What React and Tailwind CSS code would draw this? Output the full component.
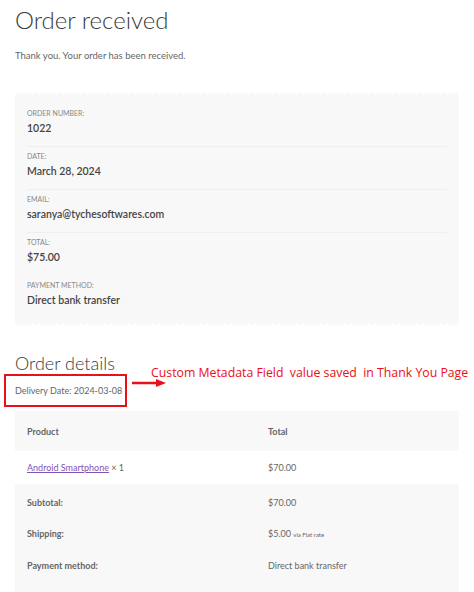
import React from 'react';

function Zigzag({ flip }) {
    return (
        <svg className="block w-full h-[3px]" preserveAspectRatio="none" viewBox="0 0 444 3">
            <defs>
                <pattern id={flip ? 'zzb' : 'zzt'} width="6" height="3" patternUnits="userSpaceOnUse">
                    {flip ? <polygon points="0,0 6,0 3,3" fill="#f8f8f8" /> : <polygon points="0,3 3,0 6,3" fill="#f8f8f8" />}
                </pattern>
            </defs>
            <rect width="444" height="3" fill={`url(#${flip ? 'zzb' : 'zzt'})`} />
        </svg>
    );
}

const overview = [
    { label: 'Order number:', value: '1022' },
    { label: 'Date:', value: 'March 28, 2024' },
    { label: 'Email:', value: 'saranya@tychesoftwares.com' },
    { label: 'Total:', value: '$75.00' },
    { label: 'Payment method:', value: 'Direct bank transfer' },
];

export default function App() {
    return (
        <div className="w-[474px] h-[592px] overflow-hidden bg-white text-[#333] relative" style={{ fontFamily: 'Lato, "Noto Sans", sans-serif' }}>
            <div className="pl-[15px] pr-[15px]">
                <h1 className="text-[24px] font-light leading-none pt-[8px] text-[#3a3a3a]">Order received</h1>
                <p className="text-[9.5px] text-[#666] mt-[17px]">Thank you. Your order has been received.</p>

                {/* Order overview */}
                <div className="mt-[29px]">
                    <Zigzag />
                    <ul className="bg-[#f8f8f8] px-[12px] pt-[9px] pb-[4px]">
                        {overview.map((row, i) => (
                            <li key={row.label} className={`h-[43px] pt-[4px] ${i < 3 ? 'border-b border-[#efefef]' : ''}`}>
                                <div className="text-[7px] uppercase text-[#888] leading-[10px]">{row.label}</div>
                                <div className="text-[10.5px] font-semibold text-[#444] leading-[14px] mt-[3px]">{row.value}</div>
                            </li>
                        ))}
                    </ul>
                    <Zigzag flip />
                </div>

                {/* Order details */}
                <h2 className="text-[18px] font-light leading-none mt-[28px] text-[#3a3a3a]">Order details</h2>
                <div className="flex items-start mt-[2px] -ml-[11px]">
                    <div className="border-[2.5px] border-[#e8101a] w-[123px] h-[33px] flex items-center pl-[9px]">
                        <span className="text-[9px] text-[#666]">Delivery Date: 2024-03-08</span>
                    </div>
                </div>

                <table className="w-full mt-[4px] text-[9px] text-[#666]">
                    <thead>
                        <tr className="bg-[#f8f8f8] h-[40px]">
                            <th className="text-left font-bold pl-[12px] w-[253px]">Product</th>
                            <th className="text-left font-bold">Total</th>
                        </tr>
                    </thead>
                    <tbody>
                        <tr className="h-[33px]">
                            <td className="pl-[12px]">
                                <span className="text-[#7f54b3] underline">Android Smartphone</span> × 1
                            </td>
                            <td>$70.00</td>
                        </tr>
                    </tbody>
                    <tfoot className="bg-[#f8f8f8]">
                        <tr className="h-[33px]">
                            <th className="text-left font-bold pl-[12px] pt-[3px]">Subtotal:</th>
                            <td className="pt-[3px]">$70.00</td>
                        </tr>
                        <tr className="h-[32px]">
                            <th className="text-left font-bold pl-[12px]">Shipping:</th>
                            <td>$5.00 <span className="text-[6px]">via Flat rate</span></td>
                        </tr>
                        <tr className="h-[32px]">
                            <th className="text-left font-bold pl-[12px]">Payment method:</th>
                            <td>Direct bank transfer</td>
                        </tr>
                        <tr className="h-[20px]">
                            <th></th>
                            <td></td>
                        </tr>
                    </tfoot>
                </table>
            </div>

            {/* Annotation */}
            <div className="absolute left-[132px] top-[378px]">
                <svg width="34" height="10" viewBox="0 0 34 10">
                    <line x1="0" y1="5" x2="25" y2="5" stroke="#e8101a" strokeWidth="2.5" />
                    <polygon points="24,1 34,5 24,9" fill="#e8101a" />
                </svg>
            </div>
            <div className="absolute left-[151px] top-[364px] text-[12.3px] text-[#e8101a] whitespace-pre" style={{ fontFamily: '"Open Sans", sans-serif' }}>
                Custom Metadata Field  value saved  in Thank You Page
            </div>
        </div>
    );
}
